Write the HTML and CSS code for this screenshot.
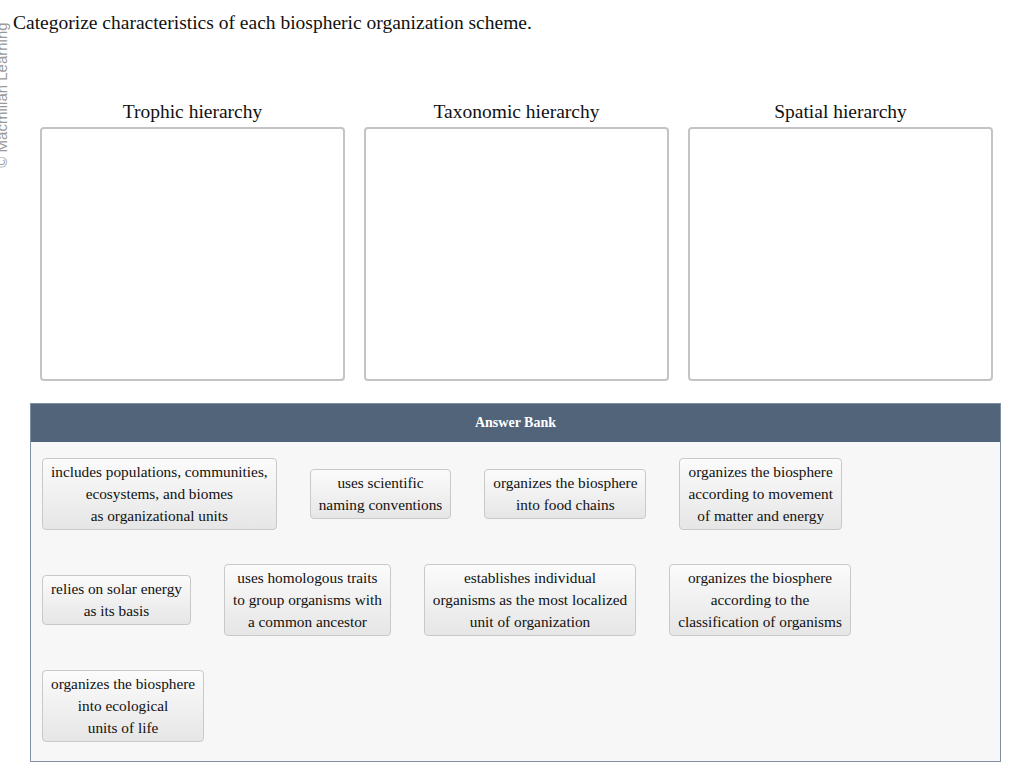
FILE: index.html
```html
<!DOCTYPE html>
<html lang="en">
<head>
    <meta charset="UTF-8">
    <meta name="viewport" content="width=device-width, initial-scale=1.0">
    <title>Categorize Biospheric Organization</title>
    <link rel="stylesheet" href="styles.css">
</head>
<body>
    <div class="watermark">© Macmillan Learning</div>

    <div class="question">Categorize characteristics of each biospheric organization scheme.</div>

    <div class="bins">
        <div class="bin">
            <div class="bin-title">Trophic hierarchy</div>
            <div class="bin-box"></div>
        </div>
        <div class="bin">
            <div class="bin-title">Taxonomic hierarchy</div>
            <div class="bin-box"></div>
        </div>
        <div class="bin">
            <div class="bin-title">Spatial hierarchy</div>
            <div class="bin-box"></div>
        </div>
    </div>

    <div class="answer-bank">
        <div class="bank-header">Answer Bank</div>
        <div class="bank-body">
            <div class="card">includes populations, communities,<br>ecosystems, and biomes<br>as organizational units</div>
            <div class="card">uses scientific<br>naming conventions</div>
            <div class="card">organizes the biosphere<br>into food chains</div>
            <div class="card">organizes the biosphere<br>according to movement<br>of matter and energy</div>
            <div class="card">relies on solar energy<br>as its basis</div>
            <div class="card">uses homologous traits<br>to group organisms with<br>a common ancestor</div>
            <div class="card">establishes individual<br>organisms as the most localized<br>unit of organization</div>
            <div class="card">organizes the biosphere<br>according to the<br>classification of organisms</div>
            <div class="card">organizes the biosphere<br>into ecological<br>units of life</div>
        </div>
    </div>
</body>
</html>
```

FILE: styles.css
```css
body {
    margin: 0;
    background-color: #ffffff;
    font-family: "Liberation Serif", "Times New Roman", serif;
    color: #111;
    position: relative;
    overflow: hidden;
}
/* copyright line, rotated and mostly cut off at the left edge */
.watermark {
    position: absolute;
    left: -83px;
    top: 86px;
    width: 170px;
    line-height: 18px;
    transform: rotate(-90deg);
    font-family: "Liberation Sans", Arial, sans-serif;
    font-size: 15px;
    color: #999;
    white-space: nowrap;
    text-align: center;
}
.question {
    font-size: 19.5px;
    line-height: 22px;
    padding: 12px 0 0 13px;
}
.bins {
    display: flex;
    gap: 19px;
    margin: 67px 0 0 40px;
}
.bin {
    width: 305px;
}
.bin-title {
    font-size: 19.5px;
    line-height: 22px;
    text-align: center;
    margin-bottom: 4px;
}
.bin-box {
    height: 250px;
    border: 2px solid #c4c4c4;
    border-radius: 4px;
}
.answer-bank {
    margin: 22px 0 0 30px;
    width: 971px;
    border: 1px solid #7f90a4;
    box-sizing: border-box;
}
.bank-header {
    background-color: #516479;
    color: #fff;
    font-size: 14px;
    font-weight: bold;
    text-align: center;
    height: 38px;
    line-height: 38px;
}
.bank-body {
    background-color: #f7f7f7;
    display: flex;
    flex-wrap: wrap;
    align-items: center;
    column-gap: 33px;
    row-gap: 34px;
    padding: 16px 11px 19px;
}
.card {
    font-size: 15.3px;
    line-height: 22px;
    text-align: center;
    padding: 2px 8px;
    border: 1px solid #c9c9c9;
    border-radius: 4px;
    background: linear-gradient(#fbfbfb, #e6e6e6);
    white-space: nowrap;
}
```
